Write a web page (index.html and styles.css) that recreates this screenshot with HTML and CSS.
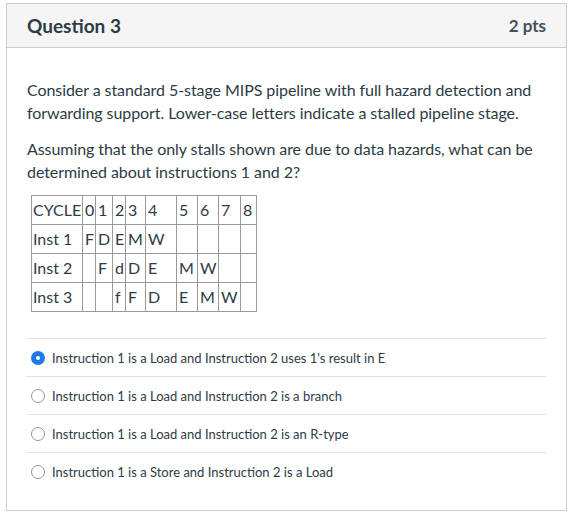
FILE: index.html
```html
<!DOCTYPE html>
<html>
<head>
<meta charset="utf-8">
<link rel="stylesheet" href="styles.css">
</head>
<body>
<div class="question">
  <div class="q-header">
    <span class="q-title">Question 3</span>
    <span class="q-pts">2 pts</span>
  </div>
  <div class="q-body">
    <p>Consider a standard 5-stage MIPS pipeline with full hazard detection and forwarding support. Lower-case letters indicate a stalled pipeline stage.</p>
    <p class="last">Assuming that the only stalls shown are due to data hazards, what can be determined about instructions 1 and 2?</p>
    <table class="pipe">
      <colgroup>
        <col class="w-l"><col class="w0"><col class="w1"><col class="w2"><col class="w3"><col class="w4"><col class="w5"><col class="w6"><col class="w7"><col class="w8">
      </colgroup>
      <tr><td>CYCLE</td><td>0</td><td>1</td><td>2</td><td>3</td><td>4</td><td>5</td><td>6</td><td>7</td><td>8</td></tr>
      <tr><td>Inst 1</td><td>F</td><td>D</td><td>E</td><td>M</td><td>W</td><td></td><td></td><td></td><td></td></tr>
      <tr><td>Inst 2</td><td></td><td>F</td><td>d</td><td>D</td><td>E</td><td>M</td><td>W</td><td></td><td></td></tr>
      <tr><td>Inst 3</td><td></td><td></td><td>f</td><td>F</td><td>D</td><td>E</td><td>M</td><td>W</td><td></td></tr>
    </table>
    <div class="answers">
      <div class="answer"><span class="radio checked"></span><span class="a-text">Instruction 1 is a Load and Instruction 2 uses 1's result in E</span></div>
      <div class="answer"><span class="radio"></span><span class="a-text">Instruction 1 is a Load and Instruction 2 is a branch</span></div>
      <div class="answer"><span class="radio"></span><span class="a-text">Instruction 1 is a Load and Instruction 2 is an R-type</span></div>
      <div class="answer"><span class="radio"></span><span class="a-text">Instruction 1 is a Store and Instruction 2 is a Load</span></div>
    </div>
  </div>
</div>
</body>
</html>
```

FILE: styles.css
```css
html, body {
  margin: 0;
  padding: 0;
  background: #ffffff;
}
body {
  font-family: Lato, "Noto Sans", sans-serif;
  color: #2d3b45;
}
.question {
  margin: 3px 0 0 6px;
  width: 559px;
  height: 506px;
  border: 1px solid #c7cdd1;
}
.q-header {
  height: 43px;
  background: #f5f5f5;
  border-bottom: 1px solid #c7cdd1;
  padding: 0 20px;
  display: flex;
  justify-content: space-between;
  align-items: center;
}
.q-title {
  font-weight: 700;
  font-size: 19px;
}
.q-pts {
  font-weight: 700;
  font-size: 17px;
  color: #444f57;
}
.q-body {
  padding: 30px 20px 0 20px;
}
.q-body p {
  margin: 0 0 13px 0;
  font-size: 16px;
  line-height: 23px;
  letter-spacing: -0.07px;
}
.q-body p.last {
  margin-bottom: 12px;
}
.pipe {
  border-collapse: collapse;
  table-layout: fixed;
  width: 225px;
  margin: 0 0 0 4px;
  font-size: 16px;
  border: 1px solid #333;
}
.pipe td {
  border: 1px solid #999;
  height: 28px;
  padding: 0 0 0 2px;
  line-height: 20px;
  vertical-align: middle;
  white-space: nowrap;
}
.pipe td:first-child {
  padding-left: 1px;
}
.pipe .w-l { width: 51px; }
.pipe .w0 { width: 13px; }
.pipe .w1 { width: 17px; }
.pipe .w2 { width: 13px; }
.pipe .w3 { width: 20px; }
.pipe .w4 { width: 31px; }
.pipe .w5 { width: 21px; }
.pipe .w6 { width: 21px; }
.pipe .w7 { width: 22px; }
.pipe .w8 { width: 16px; }
.answers {
  margin-top: 26px;
}
.answer {
  border-top: 1px solid #dfe3e6;
  height: 37px;
  display: flex;
  align-items: center;
  padding-left: 4px;
}
.radio {
  width: 14px;
  height: 14px;
  box-sizing: border-box;
  border: 1px solid #8f969b;
  border-radius: 50%;
  background: #fff;
  margin-right: 7px;
  flex: none;
  position: relative;
}
.radio.checked {
  border: none;
  background: #1f7ae8;
}
.radio.checked::after {
  content: "";
  position: absolute;
  left: 5px;
  top: 5px;
  width: 4px;
  height: 4px;
  border-radius: 50%;
  background: #fff;
}
.a-text {
  font-size: 13px;
}
```
